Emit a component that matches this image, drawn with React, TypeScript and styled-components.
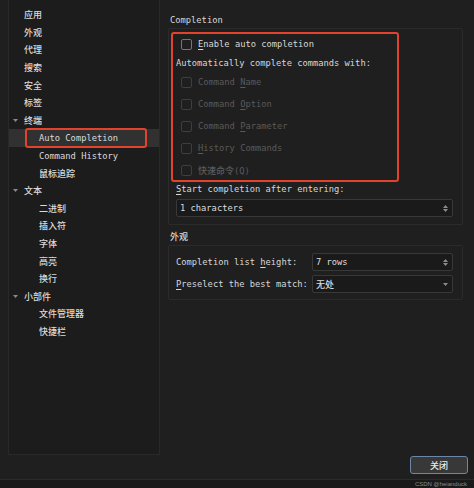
import React from "react";
import styled, { createGlobalStyle } from "styled-components";

const Global = createGlobalStyle`
  html, body { margin: 0; padding: 0; background: #1f1f1f; }
  body {
    width: 474px; height: 488px; overflow: hidden;
    font-family: "DejaVu Sans Mono", "Noto Sans CJK SC", monospace;
  }
  * { box-sizing: border-box; }
`;

const Window = styled.div`
  width: 474px;
  height: 488px;
  display: flex;
  flex-direction: column;
  background: #1f1f1f;
  color: #d8d8d8;
  font-size: 8.75px;
`;

const Main = styled.div`
  display: flex;
  height: 455px;
  padding-left: 8px;
`;

const Sidebar = styled.div`
  width: 152px;
  border: 1px solid #292929;
  border-top: none;
  background: #1c1c1c;
  padding-top: 6px;
`;

const TreeRow = styled.div<{ $depth: number; $selected?: boolean }>`
  position: relative;
  display: flex;
  align-items: center;
  height: 17.6px;
  padding-left: ${(p) => p.$depth * 15}px;
  background: ${(p) => (p.$selected ? "#313131" : "transparent")};
  white-space: nowrap;
`;

const ArrowSlot = styled.span`
  width: 15px;
  display: flex;
  align-items: center;
  padding-left: 4px;
  color: #8a8a8a;
`;

const TreeText = styled.span<{ $cjk?: boolean }>`
  font-size: ${(p) => (p.$cjk ? "9px" : "8.75px")};
  font-weight: ${(p) => (p.$cjk ? 500 : 400)};
  color: #dadada;
`;

const Annotation = styled.div`
  position: absolute;
  border: 2px solid #e2432d;
  border-radius: 3px;
  pointer-events: none;
`;

const RowMark = styled(Annotation)`
  left: 16px;
  top: -1.5px;
  width: 122px;
  height: 20px;
`;

const PanelMark = styled(Annotation)`
  left: 2px;
  top: 3px;
  width: 228px;
  height: 150px;
`;

const Content = styled.div`
  flex: 1;
  display: flex;
  flex-direction: column;
  padding: 13px 11px 0 8px;
`;

const GroupTitle = styled.div<{ $gap?: number }>`
  height: 14px;
  line-height: 14px;
  padding-left: 2px;
  margin-top: ${(p) => p.$gap ?? 0}px;
  margin-bottom: 1px;
  color: #d8d8d8;
`;

const GroupBox = styled.div`
  position: relative;
  border: 1px solid #2b2b2b;
  border-radius: 2px;
  padding: 4px 9px 7px 7px;
`;

const FormBox = styled(GroupBox)`
  display: grid;
  grid-template-columns: 136px 1fr;
  grid-auto-rows: 18px;
  row-gap: 4px;
  padding: 7px 9px 6px 7px;
`;

const CheckRow = styled.div<{ $disabled?: boolean }>`
  display: flex;
  align-items: center;
  height: 22px;
  padding-left: 5px;
  color: ${(p) => (p.$disabled ? "#5a5a5a" : "#d8d8d8")};
`;

const Box = styled.span<{ $disabled?: boolean }>`
  width: 11px;
  height: 11px;
  border: 1px solid ${(p) => (p.$disabled ? "#3e3e3e" : "#767676")};
  border-radius: 2px;
  margin-right: 6px;
  flex: none;
`;

const LabelRow = styled.div`
  display: flex;
  align-items: center;
  height: 16px;
`;

const FormLabel = styled.div`
  display: flex;
  align-items: center;
  white-space: nowrap;
`;

const Mn = styled.span`
  text-decoration: underline;
  text-underline-offset: 1.5px;
  text-decoration-thickness: 1px;
`;

const Field = styled.div<{ $top?: number }>`
  display: flex;
  align-items: center;
  justify-content: space-between;
  height: 18px;
  margin-top: ${(p) => p.$top ?? 0}px;
  border: 1px solid #383838;
  border-radius: 2px;
  background: #1a1a1a;
  padding: 0 4px 0 3px;
  color: #dedede;
`;

const Cjk = styled.span`
  font-size: 9px;
  font-weight: 500;
`;

const SpinArrows = styled.span`
  display: flex;
  flex-direction: column;
  gap: 1px;
  color: #8c8c8c;
`;

const ButtonBar = styled.div`
  height: 24px;
  display: flex;
  justify-content: flex-end;
  align-items: flex-start;
  padding: 1px 6px 0 0;
`;

const Button = styled.button`
  width: 58px;
  height: 18px;
  border: 1px solid #6c88a4;
  border-radius: 3px;
  background: #383838;
  color: #ededed;
  font-family: "Noto Sans CJK SC", sans-serif;
  font-size: 9px;
  font-weight: 500;
  padding: 0;
  display: flex;
  align-items: center;
  justify-content: center;
`;

const Footer = styled.div`
  height: 9px;
  border-top: 1px solid #2b2b2b;
  background: #1a1a1a;
  display: flex;
  align-items: center;
  justify-content: flex-end;
  padding-right: 7px;
  font-family: "Liberation Sans", sans-serif;
  font-size: 6px;
  color: #8a8a8a;
`;

const Down = () => (
  <svg width="5" height="3" viewBox="0 0 5 3">
    <path d="M0 0 L5 0 L2.5 3 Z" fill="currentColor" />
  </svg>
);
const Up = () => (
  <svg width="5" height="3" viewBox="0 0 5 3">
    <path d="M0 3 L5 3 L2.5 0 Z" fill="currentColor" />
  </svg>
);

type Node = { label: string; depth: number; expanded?: boolean; selected?: boolean; cjk?: boolean };

const tree: Node[] = [
  { label: "应用", depth: 0, cjk: true },
  { label: "外观", depth: 0, cjk: true },
  { label: "代理", depth: 0, cjk: true },
  { label: "搜索", depth: 0, cjk: true },
  { label: "安全", depth: 0, cjk: true },
  { label: "标签", depth: 0, cjk: true },
  { label: "终端", depth: 0, expanded: true, cjk: true },
  { label: "Auto Completion", depth: 1, selected: true },
  { label: "Command History", depth: 1 },
  { label: "鼠标追踪", depth: 1, cjk: true },
  { label: "文本", depth: 0, expanded: true, cjk: true },
  { label: "二进制", depth: 1, cjk: true },
  { label: "插入符", depth: 1, cjk: true },
  { label: "字体", depth: 1, cjk: true },
  { label: "高亮", depth: 1, cjk: true },
  { label: "换行", depth: 1, cjk: true },
  { label: "小部件", depth: 0, expanded: true, cjk: true },
  { label: "文件管理器", depth: 1, cjk: true },
  { label: "快捷栏", depth: 1, cjk: true },
];

const options: { pre: string; mn: string; post: string }[] = [
  { pre: "Command ", mn: "N", post: "ame" },
  { pre: "Command ", mn: "O", post: "ption" },
  { pre: "Command ", mn: "P", post: "arameter" },
  { pre: "", mn: "H", post: "istory Commands" },
];

export default function App() {
  return (
    <>
      <Global />
      <Window>
        <Main>
          <Sidebar>
            {tree.map((n) => (
              <TreeRow key={n.label} $depth={n.depth} $selected={n.selected}>
                <ArrowSlot>{n.expanded ? <Down /> : null}</ArrowSlot>
                <TreeText $cjk={n.cjk}>{n.label}</TreeText>
                {n.selected && <RowMark />}
              </TreeRow>
            ))}
          </Sidebar>
          <Content>
            <GroupTitle>Completion</GroupTitle>
            <GroupBox>
              <CheckRow>
                <Box />
                <span>
                  <Mn>E</Mn>nable auto completion
                </span>
              </CheckRow>
              <LabelRow>Automatically complete commands with:</LabelRow>
              {options.map((o) => (
                <CheckRow key={o.post} $disabled>
                  <Box $disabled />
                  <span>
                    {o.pre}
                    <Mn>{o.mn}</Mn>
                    {o.post}
                  </span>
                </CheckRow>
              ))}
              <CheckRow $disabled>
                <Box $disabled />
                <span>
                  <Cjk>快速命令</Cjk>(Q)
                </span>
              </CheckRow>
              <LabelRow>
                <span>
                  <Mn>S</Mn>tart completion after entering:
                </span>
              </LabelRow>
              <Field $top={2}>
                <span>1 characters</span>
                <SpinArrows>
                  <Up />
                  <Down />
                </SpinArrows>
              </Field>
              <PanelMark />
            </GroupBox>
            <GroupTitle $gap={5}>
              <Cjk>外观</Cjk>
            </GroupTitle>
            <FormBox>
              <FormLabel>
                <span>
                  Completion list <Mn>h</Mn>eight:
                </span>
              </FormLabel>
              <Field>
                <span>7 rows</span>
                <SpinArrows>
                  <Up />
                  <Down />
                </SpinArrows>
              </Field>
              <FormLabel>
                <span>
                  <Mn>P</Mn>reselect the best match:
                </span>
              </FormLabel>
              <Field>
                <Cjk>无处</Cjk>
                <SpinArrows>
                  <Down />
                </SpinArrows>
              </Field>
            </FormBox>
          </Content>
        </Main>
        <ButtonBar>
          <Button>关闭</Button>
        </ButtonBar>
        <Footer>CSDN @heianduck</Footer>
      </Window>
    </>
  );
}
